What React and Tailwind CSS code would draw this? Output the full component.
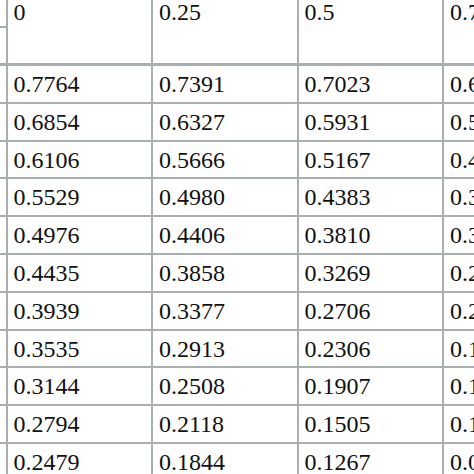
import React from "react";

const headers = ["0", "0.25", "0.5", "0.75"];

const rows = [
  ["0.7764", "0.7391", "0.7023", "0.6659"],
  ["0.6854", "0.6327", "0.5931", "0.5541"],
  ["0.6106", "0.5666", "0.5167", "0.4634"],
  ["0.5529", "0.4980", "0.4383", "0.3868"],
  ["0.4976", "0.4406", "0.3810", "0.3222"],
  ["0.4435", "0.3858", "0.3269", "0.2707"],
  ["0.3939", "0.3377", "0.2706", "0.2157"],
  ["0.3535", "0.2913", "0.2306", "0.1748"],
  ["0.3144", "0.2508", "0.1907", "0.1352"],
  ["0.2794", "0.2118", "0.1505", "0.1022"],
  ["0.2479", "0.1844", "0.1267", "0.0781"],
];

function Cell({ children }) {
  return (
    <div className="w-[145.5px] shrink-0 border-r-2 border-[#a7afaf] pl-[6px] pt-[5px] leading-[26px] whitespace-nowrap">
      {children}
    </div>
  );
}

export default function App() {
  return (
    <div
      className="w-[474px] h-[474px] overflow-hidden bg-white text-[24px] text-[#111]"
      style={{ fontFamily: '"Liberation Serif", "Times New Roman", serif' }}
    >
      {/* header */}
      <div className="flex h-[66px] border-b-[3px] border-[#a7afaf]">
        <div className="w-[7.5px] shrink-0 border-r-2 border-[#a7afaf] flex flex-col">
          <div className="h-[28px] border-b-2 border-[#a7afaf]" />
        </div>
        {headers.map((h) => (
          <div
            key={h}
            className="w-[145.5px] shrink-0 border-r-2 border-[#a7afaf] pl-[6px] leading-[24px] whitespace-nowrap"
          >
            {h}
          </div>
        ))}
      </div>

      {/* body */}
      {rows.map((r, i) => (
        <div key={i} className="flex h-[37.8px] border-b-2 border-[#a7afaf]">
          <div className="w-[7.5px] shrink-0 border-r-2 border-[#a7afaf]" />
          {r.map((v, j) => (
            <Cell key={j}>{v}</Cell>
          ))}
        </div>
      ))}
    </div>
  );
}
